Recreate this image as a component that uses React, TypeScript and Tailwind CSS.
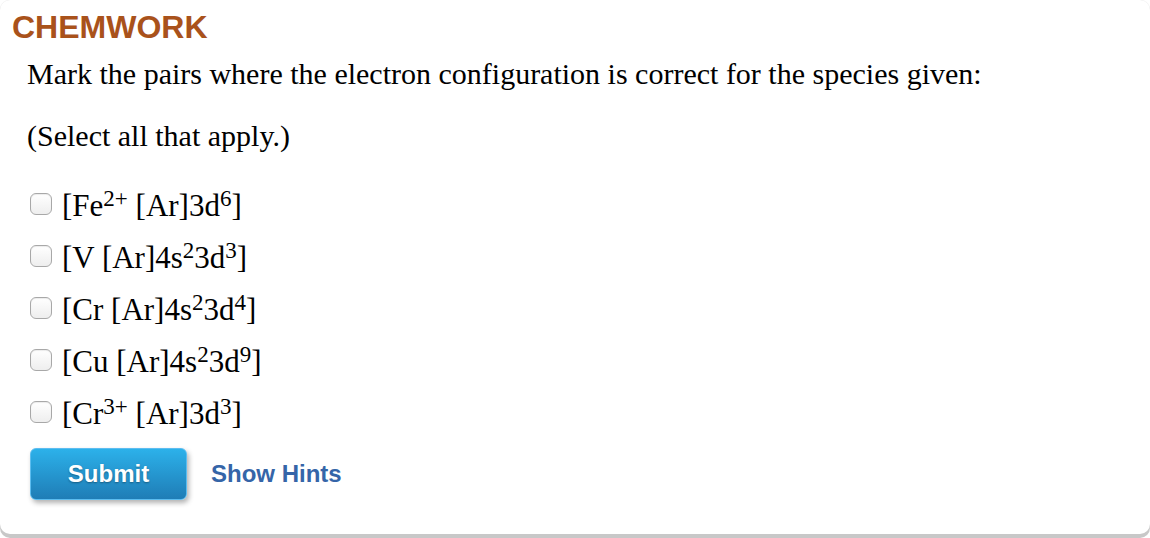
import React from "react";

const serif = { fontFamily: '"Liberation Serif", "Times New Roman", serif' };

function Opt({ children }: { children: React.ReactNode }) {
  return (
    <div className="flex items-center h-[52px]">
      <span className="w-[22px] h-[22px] rounded-[6px] border border-[#a8a8a8] bg-gradient-to-b from-[#ffffff] to-[#eeeeee] shadow-[inset_0_1px_1px_rgba(0,0,0,0.08)] ml-[30px] mr-[10px] shrink-0" />
      <span className="text-[31px] leading-none text-black" style={serif}>{children}</span>
    </div>
  );
}

const Sup = ({ c }: { c: string }) => (
  <sup className="text-[23px] leading-none" style={{ verticalAlign: "0.42em", top: 0 }}>{c}</sup>
);

export default function App() {
  return (
    <div className="w-[1150px] h-[538px] bg-white overflow-hidden">
      <div className="h-[534px] bg-white rounded-[10px] shadow-[0_4px_0_#c8c8c8,0_0_1px_#d8d8d8] relative">
        <div className="pl-[12px] pt-[9px] text-[32px] leading-[36px] font-bold text-[#a9521b] font-['Liberation_Sans',Arial,sans-serif]">
          CHEMWORK
        </div>
        <div className="pl-[27px] pt-[12px] text-[30px] leading-[34px] text-black" style={serif}>
          Mark the pairs where the electron configuration is correct for the species given:
        </div>
        <div className="pl-[27px] pt-[28px] text-[30px] leading-[34px] text-black" style={serif}>
          (Select all that apply.)
        </div>
        <div className="pt-[25px]">
          <Opt>[Fe<Sup c="2+" /> [Ar]3d<Sup c="6" />]</Opt>
          <Opt>[V [Ar]4s<Sup c="2" />3d<Sup c="3" />]</Opt>
          <Opt>[Cr [Ar]4s<Sup c="2" />3d<Sup c="4" />]</Opt>
          <Opt>[Cu [Ar]4s<Sup c="2" />3d<Sup c="9" />]</Opt>
          <Opt>[Cr<Sup c="3+" /> [Ar]3d<Sup c="3" />]</Opt>
        </div>
        <div className="flex items-center pl-[30px] pt-[10px] gap-[24px] font-['Liberation_Sans',Arial,sans-serif]">
          <button className="w-[157px] h-[52px] rounded-[6px] border border-[#5cbdf0] bg-gradient-to-b from-[#2cb1ea] to-[#1f7db6] shadow-[2px_3px_5px_rgba(0,0,0,0.3)] text-white font-bold text-[24px] [text-shadow:0_1px_2px_rgba(0,0,0,0.35)]">
            Submit
          </button>
          <span className="text-[#3565a8] font-bold text-[24px]">Show Hints</span>
        </div>
      </div>
    </div>
  );
}
